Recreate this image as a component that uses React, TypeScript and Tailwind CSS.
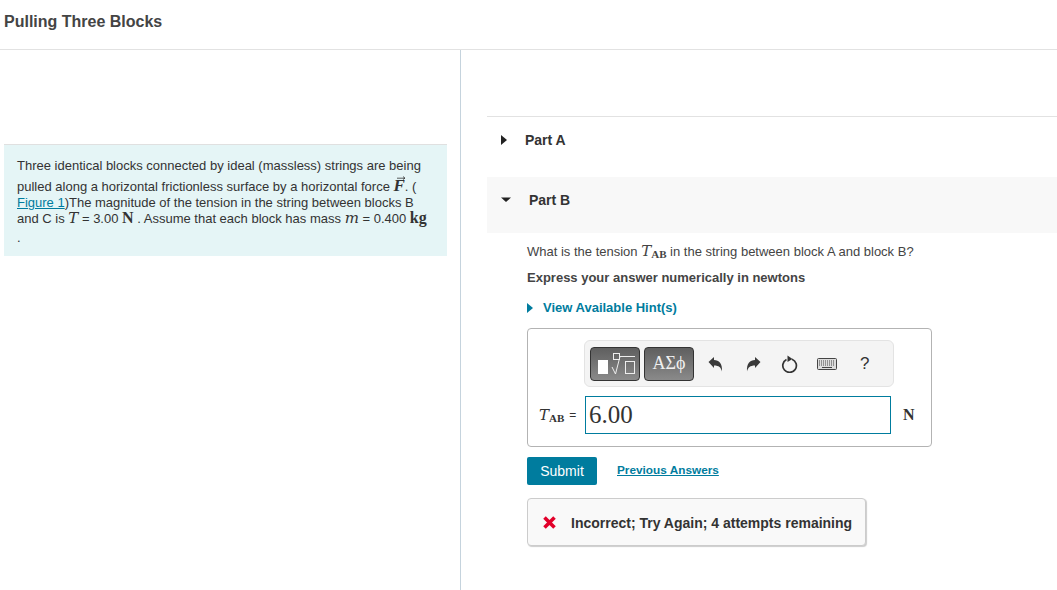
import React from "react";

const Tri = ({ dir, cls }: { dir: "right" | "down"; cls: string }) => (
  <svg width="10" height="10" viewBox="0 0 10 10" className={cls}>
    {dir === "right" ? <path d="M2 0 L8 5 L2 10 Z" fill="currentColor" /> : <path d="M0 2.5 L10 2.5 L5 7 Z" fill="currentColor" />}
  </svg>
);

const serif = "[font-family:'Liberation_Serif',serif]";
const mathIt = "[font-family:'DejaVu_Serif',serif] italic font-normal";

export default function App() {
  return (
    <div className="w-[1057px] h-[590px] overflow-hidden bg-white text-[#333] font-['Liberation_Sans',Arial,sans-serif]">
      <header className="h-[50px] border-b border-[#e2e2e2] pl-1 pt-[13px]">
        <h1 className="text-[16px] leading-[18px] font-bold text-[#444]">Pulling Three Blocks</h1>
      </header>
      <div className="flex h-[540px]">
        <aside className="w-[461px] shrink-0 border-r border-[#c5d3dd] pl-1 pr-[13px] pt-[94px]">
          <div className="h-[112px] bg-[#e5f5f6] border-t border-[#e0e0e0] pl-[13px] pt-[12px] text-[13px] text-[#333]">
            <div className="h-[18px] leading-[18px] whitespace-nowrap">Three identical blocks connected by ideal (massless) strings are being</div>
            <div className="h-[20px] leading-[24px] whitespace-nowrap">
              pulled along a horizontal frictionless surface by a horizontal force{" "}
              <span className="relative inline-block">
                <i className={`${serif} font-bold text-[17px] leading-none`}>F</i>
                <svg width="9" height="4" viewBox="0 0 9 4" className="absolute left-[3px] top-[1px]">
                  <path d="M0 2.2 H8 M6 0.5 L8 2.2 L6 3.5" stroke="#333" strokeWidth="0.8" fill="none" />
                </svg>
              </span>
              . (
            </div>
            <div className="h-[15px] leading-[16px] whitespace-nowrap">
              <a className="text-[#007c9e] underline">Figure 1</a>)The magnitude of the tension in the string between blocks B
            </div>
            <div className="h-[18px] leading-[16px] whitespace-nowrap">
              and C is <span className={`${mathIt} text-[15px]`}>T</span> = 3.00 <b className={`${serif} text-[16px]`}>N</b> . Assume that each block has mass <span className={`${mathIt} text-[15px]`}>m</span> = 0.400 <b className={`${serif} text-[16px]`}>kg</b>
            </div>
            <div className="leading-[20px]">.</div>
          </div>
        </aside>
        <main className="flex-1 min-w-0 pl-[26px] pt-[66px]">
          <section className="h-[61px] border-t border-[#e2e2e2] flex items-start pt-[16px]">
            <Tri dir="right" cls="ml-[12px] mt-[2px] text-[#222]" />
            <span className="ml-[16px] text-[14px] leading-[14px] font-bold text-[#333]">Part A</span>
          </section>
          <section className="h-[56px] bg-[#f8f8f8] flex items-start pt-[16px]">
            <Tri dir="down" cls="ml-[14px] mt-[2px] text-[#222]" />
            <span className="ml-[18px] text-[14px] leading-[14px] font-bold text-[#333]">Part B</span>
          </section>
          <div className="pl-[40px]">
            <p className="mt-[9px] h-[20px] leading-[18px] text-[13px] text-[#444] whitespace-nowrap">
              What is the tension <span className={`${mathIt} text-[15px]`}>T</span><b className={`${serif} text-[11px] relative top-[2px]`}>AB</b> in the string between block A and block B?
            </p>
            <p className="mt-[8px] h-[16px] leading-[16px] text-[13px] font-bold text-[#444]">Express your answer numerically in newtons</p>
            <div className="mt-[14px] flex items-center h-[16px] text-[#007c9e]">
              <Tri dir="right" cls="-ml-[2px]" />
              <span className="ml-[8px] text-[13px] font-bold">View Available Hint(s)</span>
            </div>
            <div className="mt-[12px] w-[405px] h-[119px] border border-[#b3b3b3] rounded-[4px]">
              <div className="ml-[56px] mt-[11px] w-[310px] h-[47px] bg-[#f4f4f4] border border-[#e3e3e3] rounded-[6px] flex items-center pl-[5px]">
                <div className="w-[50px] h-[34px] rounded-[4px] border border-[#333] bg-gradient-to-b from-[#5f5f5f] to-[#8a8a8a]">
                  <svg width="48" height="32" viewBox="0 0 48 32" fill="none" stroke="#eee" strokeWidth="1">
                    <rect x="7" y="12" width="10" height="14" fill="#fff" stroke="none" />
                    <rect x="22.5" y="5.5" width="6" height="6" />
                    <path d="M21 19 L24.5 26 L29 8.5 H44" />
                    <rect x="34.5" y="13.5" width="9" height="12" />
                  </svg>
                </div>
                <div className={`ml-[4px] w-[50px] h-[34px] rounded-[4px] border border-[#333] bg-gradient-to-b from-[#5f5f5f] to-[#8a8a8a] flex items-center justify-center text-[18px] text-[#f0f0f0] ${serif}`}>ΑΣϕ</div>
                <svg width="15" height="16" viewBox="0 0 15 16" className="ml-[14px]">
                  <path d="M0.5 6 L6 1 V4 C11 4 14.5 7.5 14 15.5 C13 11.5 11 9.5 6 9.5 V12 Z" fill="#3a3a3a" />
                </svg>
                <svg width="15" height="16" viewBox="0 0 15 16" className="ml-[23px]">
                  <path d="M14.5 6 L9 1 V4 C4 4 0.5 7.5 1 15.5 C2 11.5 4 9.5 9 9.5 V12 Z" fill="#3a3a3a" />
                </svg>
                <svg width="17" height="18" viewBox="0 0 17 18" className="ml-[20px]" fill="none">
                  <path d="M5.5 4.5 A6.8 6.8 0 1 0 11 4.2" stroke="#333" strokeWidth="1.7" />
                  <path d="M6.5 0.5 L11.5 4 L6.5 7 Z" fill="#333" />
                </svg>
                <svg width="20" height="12" viewBox="0 0 20 12" className="ml-[19px]">
                  <rect x="0.5" y="0.5" width="19" height="11" rx="1" fill="#dcdcdc" stroke="#444" />
                  <path d="M2 3 H18 M2 5 H18 M2 7 H18" stroke="#444" strokeWidth="1" strokeDasharray="1 1" />
                  <path d="M5 9.5 H15" stroke="#444" strokeWidth="1" />
                </svg>
                <span className="ml-[23px] text-[17px] text-[#333] leading-none">?</span>
              </div>
              <div className="flex items-center mt-[9px]">
                <span className={`ml-[11px] w-[46px] text-[#333] ${serif} whitespace-nowrap`}>
                  <span className={`${mathIt} text-[15px]`}>T</span><b className="text-[11px] relative top-[2px]">AB</b>
                  <span className="text-[12px] ml-[5px] font-['Liberation_Sans'] relative -top-[1px]">=</span>
                </span>
                <div className={`w-[306px] h-[38px] border border-[#007c9e] pl-[3px] text-[25px] leading-[36px] text-[#333] ${serif}`}>6.00</div>
                <b className={`ml-[12px] text-[16px] leading-none font-bold text-[#333] ${serif}`}>N</b>
              </div>
            </div>
            <div className="mt-[10px] flex items-start">
              <button className="w-[70px] h-[28px] bg-[#007c9e] rounded-[2px] text-white text-[14px] leading-[28px]">Submit</button>
              <a className="ml-[20px] mt-[6px] text-[11.8px] leading-[15px] font-bold text-[#007c9e] underline">Previous Answers</a>
            </div>
            <div className="mt-[13px] w-[339px] h-[48px] bg-[#f9f9f9] border border-[#ccc] rounded-[4px] shadow-[1px_1px_1px_rgba(0,0,0,0.2)] flex items-center pl-[14px]">
              <svg width="15" height="15" viewBox="0 0 15 15">
                <path d="M2.5 2.5 L12.5 12.5 M12.5 2.5 L2.5 12.5" stroke="#e2002a" strokeWidth="3.6" strokeLinecap="butt" />
              </svg>
              <span className="ml-[14px] mt-[2px] text-[14px] font-bold text-[#333] whitespace-nowrap">Incorrect; Try Again; 4 attempts remaining</span>
            </div>
          </div>
        </main>
      </div>
    </div>
  );
}
